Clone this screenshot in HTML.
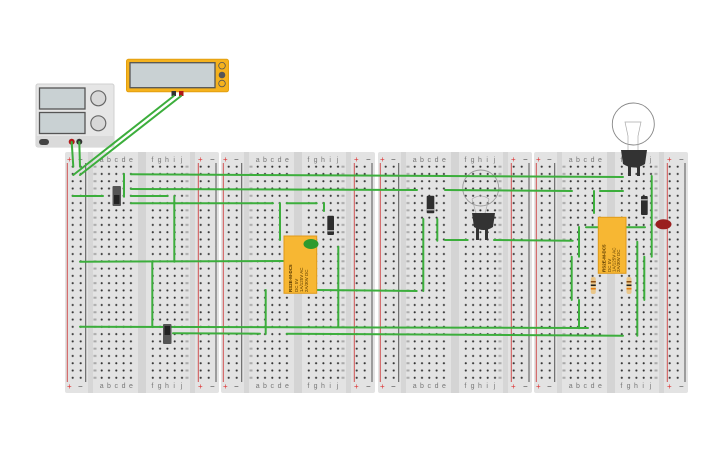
<!DOCTYPE html>
<html><head><meta charset="utf-8"><style>
html,body{margin:0;padding:0;background:#fff;width:725px;height:453px;overflow:hidden}
svg{display:block}
text{font-family:"Liberation Sans",sans-serif}
</style></head><body>
<svg width="725" height="453" viewBox="0 0 725 453" xmlns="http://www.w3.org/2000/svg">
<defs>
<pattern id="m" patternUnits="userSpaceOnUse" x="33.05" y="163.06" width="7.3" height="7.28"><circle cx="3.65" cy="3.64" r="1.05" fill="#333"/></pattern>
<pattern id="r" patternUnits="userSpaceOnUse" x="3.7" y="163.06" width="8" height="7.28"><circle cx="4" cy="3.64" r="1.05" fill="#333"/></pattern>
<pattern id="n" patternUnits="userSpaceOnUse" x="0" y="163.06" width="4" height="7.28"><rect x="0.5" y="2.6" width="3" height="2" fill="#aaa"/></pattern>
<g id="bb">
<rect x="0" y="152" width="154" height="241" rx="2" fill="#e3e3e3"/>
<rect x="23" y="152" width="5" height="241" fill="#d6d6d6"/>
<rect x="125" y="152" width="5" height="241" fill="#d6d6d6"/>
<rect x="73" y="152" width="8" height="241" fill="#d4d4d4"/>
<line x1="2.3" y1="163" x2="2.3" y2="382" stroke="#d05050" stroke-width="1"/>
<line x1="20.7" y1="163" x2="20.7" y2="382" stroke="#555" stroke-width="1"/>
<line x1="133.3" y1="163" x2="133.3" y2="382" stroke="#d05050" stroke-width="1"/>
<line x1="151" y1="163" x2="151" y2="382" stroke="#555" stroke-width="1"/>
<rect x="3.7" y="163" width="16" height="218.4" fill="url(#r)"/>
<rect x="134.3" y="163" width="16" height="218.4" fill="url(#r)"/>
<rect x="33.05" y="163.06" width="36.5" height="218.4" fill="url(#m)"/>
<rect x="83.65" y="163.06" width="36.5" height="218.4" fill="url(#m)"/>
<rect x="28" y="163.06" width="4" height="218.4" fill="url(#n)"/>
<rect x="120" y="163.06" width="4" height="218.4" fill="url(#n)"/>
<g font-size="7" fill="#777" text-anchor="middle">
<text x="36.7" y="162">a</text><text x="44" y="162">b</text><text x="51.3" y="162">c</text><text x="58.6" y="162">d</text><text x="65.9" y="162">e</text>
<text x="87.3" y="162">f</text><text x="94.6" y="162">g</text><text x="101.9" y="162">h</text><text x="109.2" y="162">i</text><text x="116.5" y="162">j</text>
<text x="36.7" y="388">a</text><text x="44" y="388">b</text><text x="51.3" y="388">c</text><text x="58.6" y="388">d</text><text x="65.9" y="388">e</text>
<text x="87.3" y="388">f</text><text x="94.6" y="388">g</text><text x="101.9" y="388">h</text><text x="109.2" y="388">i</text><text x="116.5" y="388">j</text>
</g>
<g font-size="8">
<text x="2" y="162" fill="#d33">+</text><text x="13" y="162" fill="#444">−</text>
<text x="133" y="162" fill="#d33">+</text><text x="145" y="162" fill="#444">−</text>
<text x="2" y="389" fill="#d33">+</text><text x="13" y="389" fill="#444">−</text>
<text x="133" y="389" fill="#d33">+</text><text x="145" y="389" fill="#444">−</text>
</g>
</g>
</defs>
<use href="#bb" x="65"/>
<use href="#bb" x="221"/>
<use href="#bb" x="378"/>
<use href="#bb" x="534"/>

<!-- power supply -->
<rect x="36" y="84" width="78" height="63" rx="2" fill="#e6e6e6" stroke="#d0d0d0"/>
<rect x="36" y="136" width="78" height="11" fill="#dadada"/>
<rect x="39.5" y="88" width="45.5" height="21" fill="#c9d1d3" stroke="#555" stroke-width="1.3"/>
<rect x="39.5" y="112.5" width="45.5" height="21" fill="#c9d1d3" stroke="#555" stroke-width="1.3"/>
<circle cx="98.3" cy="98.3" r="7.5" fill="#d8d8d8" stroke="#666" stroke-width="1.2"/>
<circle cx="98.3" cy="123.3" r="7.5" fill="#d8d8d8" stroke="#666" stroke-width="1.2"/>
<rect x="39" y="139" width="10" height="6" rx="3" fill="#444"/>
<circle cx="71.7" cy="141.7" r="3" fill="#b01818"/>
<circle cx="79.3" cy="141.7" r="3" fill="#333"/>
<!-- multimeter -->
<rect x="126.5" y="59.3" width="102" height="32.5" rx="2" fill="#f5b21d" stroke="#e3a010"/>
<rect x="130" y="62.7" width="85" height="25" fill="#c9d1d3" stroke="#555" stroke-width="1.3"/>
<circle cx="222" cy="65.7" r="3.3" fill="#f5b21d" stroke="#555" stroke-width="0.8"/>
<circle cx="222" cy="75" r="3.3" fill="#555"/>
<circle cx="222" cy="83.5" r="3.3" fill="#f5b21d" stroke="#555" stroke-width="0.8"/>
<rect x="171.5" y="91" width="4.5" height="5" fill="#333"/>
<rect x="179" y="91" width="4.5" height="5" fill="#b01818"/>

<!-- board3 bulb glass (behind) -->
<circle cx="480.7" cy="188" r="18" fill="none" stroke="#9a9a9a" stroke-width="0.9"/>
<path d="M476 213 l-4 -14 M485 213 l4 -14 M472 199 q9 -6 17 0" fill="none" stroke="#aaa" stroke-width="0.7"/>

<g stroke="#3cae3c" stroke-width="2" fill="none" stroke-linecap="round">
<line x1="71.7" y1="142" x2="73.3" y2="166.7"/>
<line x1="79.3" y1="142" x2="80" y2="166.7"/>
<line x1="173.7" y1="96" x2="73.3" y2="175"/>
<line x1="181" y1="96" x2="80" y2="175"/>
<line x1="124" y1="174" x2="124" y2="196.7"/>
<line x1="131" y1="174.3" x2="623" y2="177"/>
<line x1="131" y1="189" x2="417" y2="190"/>
<line x1="445" y1="190" x2="572" y2="191"/>
<line x1="600" y1="191" x2="623" y2="191"/>
<line x1="72.7" y1="196" x2="103" y2="196"/>
<line x1="131" y1="196" x2="167.7" y2="196"/>
<line x1="174.3" y1="196" x2="174.3" y2="261.7"/>
<line x1="131" y1="203.3" x2="273" y2="203.3"/>
<line x1="286.7" y1="203.3" x2="316.7" y2="203.3"/>
<line x1="280" y1="203.3" x2="280" y2="240"/>
<line x1="324" y1="203" x2="324" y2="211"/>
<line x1="80" y1="261.7" x2="285" y2="261"/>
<line x1="152.3" y1="261.7" x2="152.3" y2="326.7"/>
<line x1="80" y1="326.7" x2="588" y2="328"/>
<line x1="173" y1="333.3" x2="260" y2="333.7"/>
<line x1="286.7" y1="333.7" x2="623" y2="335.7"/>
<line x1="265.7" y1="290" x2="265.7" y2="334"/>
<line x1="315.7" y1="290" x2="416.7" y2="291"/>
<line x1="423.3" y1="219" x2="423.3" y2="291"/>
<line x1="338.3" y1="246.7" x2="338.3" y2="326"/>
<line x1="437.3" y1="219" x2="437.3" y2="240.7"/>
<line x1="445" y1="240" x2="467.7" y2="240"/>
<line x1="494" y1="240" x2="572.7" y2="240.7"/>
<line x1="594" y1="191" x2="594" y2="213"/>
<line x1="586" y1="227.3" x2="598" y2="227.3"/>
<line x1="626.7" y1="227.3" x2="645" y2="227.3"/>
<line x1="579" y1="227" x2="579" y2="256.7"/>
<line x1="571.7" y1="256.7" x2="571.7" y2="300"/>
<line x1="579" y1="300" x2="579" y2="328.3"/>
<line x1="651.7" y1="176" x2="651.7" y2="256.7"/>
<line x1="637.3" y1="241.7" x2="637.3" y2="335.7"/>
<line x1="644.3" y1="256.7" x2="644.3" y2="300"/>
</g>

<!-- switches -->
<rect x="112.5" y="186" width="8.5" height="20" rx="1" fill="#555"/><rect x="114" y="195" width="5.5" height="9" fill="#222"/>
<rect x="163" y="324" width="8.5" height="20" rx="1" fill="#555"/><rect x="164.5" y="326" width="5.5" height="9" fill="#222"/>
<!-- diodes -->
<rect x="327.3" y="215.7" width="6.7" height="19.3" rx="1" fill="#2e2e2e"/><rect x="327.3" y="230" width="6.7" height="1.5" fill="#aaa"/>
<rect x="426.7" y="195.7" width="7.6" height="17.6" rx="1" fill="#2e2e2e"/><rect x="426.7" y="209" width="7.6" height="1.5" fill="#aaa"/>
<rect x="641" y="196" width="6.7" height="19" rx="1" fill="#2e2e2e"/><rect x="641" y="199" width="6.7" height="1.5" fill="#aaa"/>
<!-- relays -->
<g font-size="4.5" fill="#5a3a00">
<rect x="284" y="236" width="32.7" height="57.3" fill="#f7b733" stroke="#e09a1a"/>
<text transform="translate(292,292) rotate(-90)" font-weight="bold">RS2E-M-DC5</text>
<text transform="translate(298,292) rotate(-90)">DC 5V</text>
<text transform="translate(303,292) rotate(-90)">1A/125V AC</text>
<text transform="translate(308,292) rotate(-90)">2A/30V DC</text>
<rect x="598.3" y="217.3" width="27.7" height="56" fill="#f7b733" stroke="#e09a1a"/>
<text transform="translate(605.5,272) rotate(-90)" font-weight="bold">RS2E-M-DC5</text>
<text transform="translate(611,272) rotate(-90)">DC 5V</text>
<text transform="translate(615.5,272) rotate(-90)">1A/125V AC</text>
<text transform="translate(620,272) rotate(-90)">2A/30V DC</text>
</g>
<!-- LEDs -->
<ellipse cx="311" cy="244" rx="7.5" ry="5" fill="#2e9a2e"/>
<ellipse cx="663.5" cy="224.3" rx="8" ry="5" fill="#9a1f1f"/>
<!-- resistors -->
<g>
<rect x="590.8" y="277" width="5" height="17" rx="2" fill="#e9c68a"/>
<rect x="590.8" y="281" width="5" height="1.5" fill="#8a4b10"/><rect x="590.8" y="284.5" width="5" height="1.5" fill="#222"/><rect x="590.8" y="288" width="5" height="1.5" fill="#e07b10"/>
<rect x="626.5" y="277" width="5" height="17" rx="2" fill="#e9c68a"/>
<rect x="626.5" y="281" width="5" height="1.5" fill="#8a4b10"/><rect x="626.5" y="284.5" width="5" height="1.5" fill="#222"/><rect x="626.5" y="288" width="5" height="1.5" fill="#e07b10"/>
</g>
<!-- bulbs -->
<path d="M472 213 h23 l-2 14 q-9 6 -19 0 z" fill="#333"/>
<rect x="476" y="228" width="3" height="12" fill="#333"/><rect x="485" y="228" width="3" height="12" fill="#333"/>
<circle cx="633.3" cy="124" r="21" fill="#fff" stroke="#888" stroke-width="0.9"/>
<path d="M628 150 v-14 l-3 -14 h16 l-3 14 v14" fill="none" stroke="#aaa" stroke-width="0.7"/>
<path d="M621 150 h26 l-2 14 q-11 7 -22 0 z" fill="#333"/>
<rect x="628" y="165" width="3" height="11" fill="#333"/><rect x="637" y="165" width="3" height="11" fill="#333"/>
</svg>
</body></html>
